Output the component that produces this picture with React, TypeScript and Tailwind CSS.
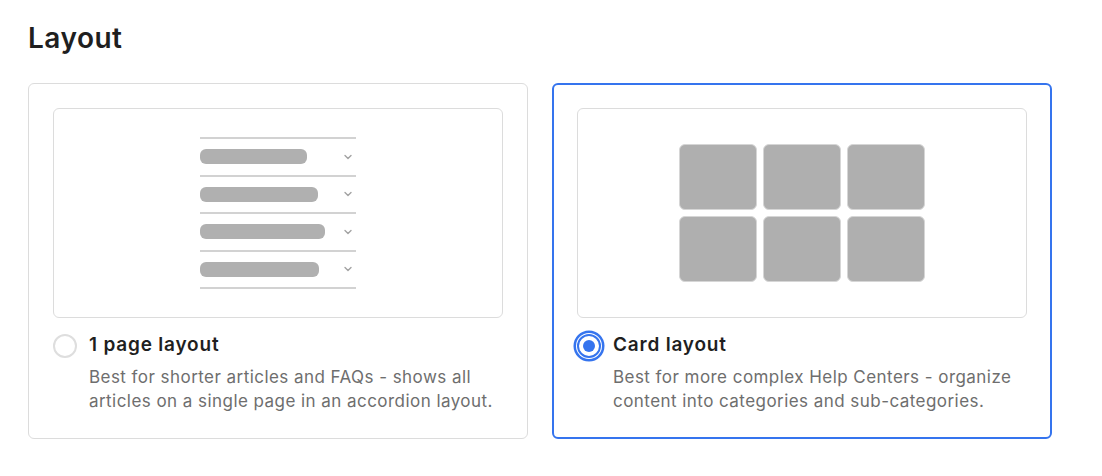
import React from "react";

const Chevron = () => (
  <svg width="8" height="6" viewBox="0 0 8 6" className="shrink-0">
    <polyline points="1,1.5 4,4.5 7,1.5" fill="none" stroke="#a3a3a3" strokeWidth="1.4" strokeLinecap="round" strokeLinejoin="round" />
  </svg>
);

const AccordionPreview = () => {
  const widths = [107, 118, 125, 119];
  return (
    <div className="w-[156px] flex flex-col">
      {widths.map((w, i) => (
        <React.Fragment key={i}>
          <div className="h-[2px] bg-[#d2d2d2]" />
          <div className="h-[35.5px] flex items-center justify-between pr-[4px]">
            <div className="h-[15px] rounded-[6px] bg-[#b0b0b0]" style={{ width: w }} />
            <Chevron />
          </div>
        </React.Fragment>
      ))}
      <div className="h-[2px] bg-[#d2d2d2]" />
    </div>
  );
};

const CardPreview = () => (
  <div className="grid grid-cols-3 gap-[6px]">
    {Array.from({ length: 6 }).map((_, i) => (
      <div key={i} className="w-[78px] h-[66px] rounded-[6px] bg-[#afafaf] border border-[#d6d6d6]" />
    ))}
  </div>
);

const Option = ({
  selected,
  title,
  desc,
  children,
}: {
  selected: boolean;
  title: string;
  desc: string[];
  children: React.ReactNode;
}) => (
  <div
    className={
      "w-[500px] h-[356px] rounded-[6px] bg-white flex flex-col " +
      (selected ? "border-2 border-[#3574ee] p-[23px]" : "border border-[#dcdcdc] p-[24px]")
    }
  >
    <div className="h-[210px] rounded-[6px] border border-[#dcdcdc] flex items-center justify-center">
      {children}
    </div>
    <div className="mt-[15px] flex items-start gap-[12px]">
      <div className="h-[24px] w-[24px] flex items-center justify-center mt-[1px]">
        {selected ? (
          <span className="w-[24px] h-[24px] rounded-full border-2 border-[#3574ee] bg-white flex items-center justify-center shadow-[0_0_0_1px_#ffffff,0_0_0_3.5px_#3574ee]">
            <span className="w-[12px] h-[12px] rounded-full bg-[#3574ee]" />
          </span>
        ) : (
          <span className="w-[24px] h-[24px] rounded-full border-2 border-[#dedede] bg-white" />
        )}
      </div>
      <div className="flex flex-col">
        <div className="text-[19px] leading-[24px] font-semibold text-[#1f1f1f] tracking-[0.8px]">{title}</div>
        <div className="mt-[8px] text-[17px] leading-[24px] text-[#6e6e6e] tracking-[0.45px]">
          {desc.map((d, i) => (
            <div key={i} className="whitespace-nowrap">{d}</div>
          ))}
        </div>
      </div>
    </div>
  </div>
);

export default function App() {
  return (
    <div
      className="w-[1102px] h-[476px] bg-white pl-[28px] pt-[20px]"
      style={{ fontFamily: "Inter, 'Noto Sans', sans-serif" }}
    >
      <h1 className="text-[28px] leading-[36px] font-semibold text-[#1f1f1f] tracking-[0.5px]">Layout</h1>
      <div className="mt-[27px] flex gap-[24px]">
        <Option
          selected={false}
          title="1 page layout"
          desc={["Best for shorter articles and FAQs - shows all", "articles on a single page in an accordion layout."]}
        >
          <AccordionPreview />
        </Option>
        <Option
          selected={true}
          title="Card layout"
          desc={["Best for more complex Help Centers - organize", "content into categories and sub-categories."]}
        >
          <CardPreview />
        </Option>
      </div>
    </div>
  );
}
